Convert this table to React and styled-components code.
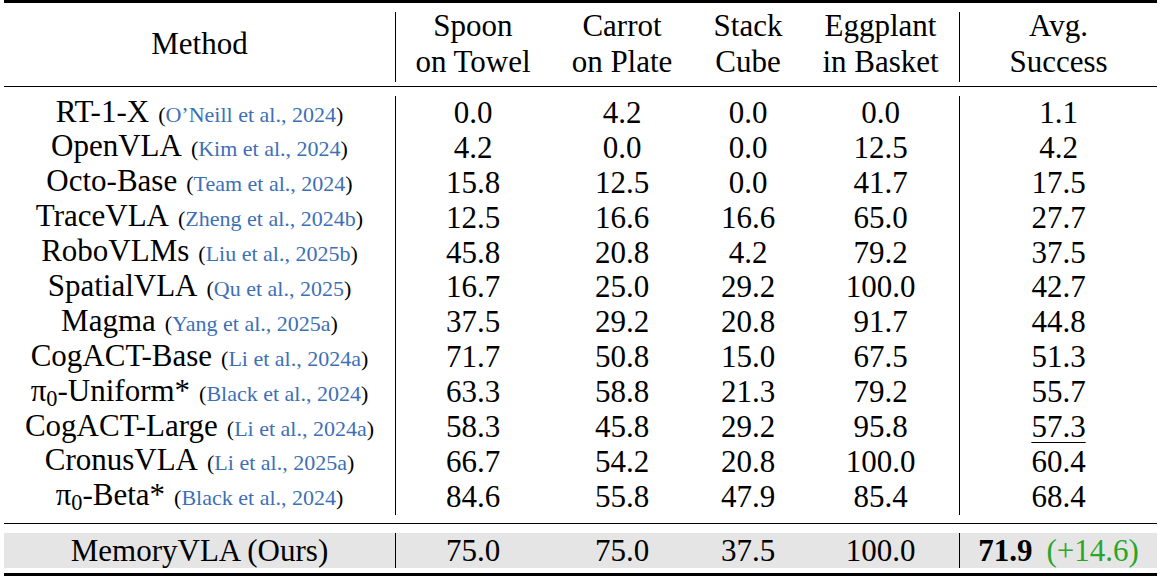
import React from "react";
import styled, { createGlobalStyle } from "styled-components";

const SERIF = '"Liberation Serif", "Times New Roman", serif';

const GlobalStyle = createGlobalStyle`
  html, body {
    margin: 0;
    padding: 0;
    background: #ffffff;
  }
  body {
    font-family: ${SERIF};
  }
`;

const COLS = "392px 154px 144px 108px 158px 197px";

const Page = styled.div`
  width: 1153px;
  padding-left: 4px;
  font-family: ${SERIF};
  font-size: 31px;
  color: #000;
`;

const Rule = styled.div`
  height: ${(p) => p.$h || 1}px;
  background: #000;
`;

const Section = styled.div`
  padding: ${(p) => p.$pad};
`;

const RowGrid = styled.div`
  display: grid;
  grid-template-columns: ${COLS};
  background: ${(p) => (p.$shade ? "#e5e5e5" : "transparent")};
`;

const Cell = styled.div`
  display: flex;
  align-items: center;
  justify-content: center;
  white-space: nowrap;
  height: ${(p) => p.$h}px;
  line-height: ${(p) => p.$h}px;
  border-right: ${(p) => (p.$divider ? "1px solid #000" : "none")};
`;

const HeadCell = styled.div`
  display: flex;
  align-items: center;
  justify-content: center;
  text-align: center;
  height: 70px;
  padding-bottom: 6px;
  box-sizing: border-box;
  line-height: 36px;
  border-right: ${(p) => (p.$divider ? "1px solid #000" : "none")};
`;

const Cite = styled.span`
  font-size: 22px;
  margin-left: 9px;
  color: #000;
`;

const CiteLink = styled.span`
  color: #3d6fb6;
`;

const Sub = styled.span`
  display: inline-block;
  font-size: 0.72em;
  line-height: 1;
  transform: translateY(0.22em);
`;

const Under = styled.span`
  text-decoration: underline;
  text-decoration-thickness: 1px;
  text-underline-offset: 5px;
`;

const Best = styled.span`
  font-weight: bold;
`;

const Gain = styled.span`
  color: #2aa52a;
  margin-left: 14px;
`;

const headers = [
  ["Method"],
  ["Spoon", "on Towel"],
  ["Carrot", "on Plate"],
  ["Stack", "Cube"],
  ["Eggplant", "in Basket"],
  ["Avg.", "Success"],
];

const rows = [
  { name: "RT-1-X", cite: "O’Neill et al., 2024", v: ["0.0", "4.2", "0.0", "0.0", "1.1"] },
  { name: "OpenVLA", cite: "Kim et al., 2024", v: ["4.2", "0.0", "0.0", "12.5", "4.2"] },
  { name: "Octo-Base", cite: "Team et al., 2024", v: ["15.8", "12.5", "0.0", "41.7", "17.5"] },
  { name: "TraceVLA", cite: "Zheng et al., 2024b", v: ["12.5", "16.6", "16.6", "65.0", "27.7"] },
  { name: "RoboVLMs", cite: "Liu et al., 2025b", v: ["45.8", "20.8", "4.2", "79.2", "37.5"] },
  { name: "SpatialVLA", cite: "Qu et al., 2025", v: ["16.7", "25.0", "29.2", "100.0", "42.7"] },
  { name: "Magma", cite: "Yang et al., 2025a", v: ["37.5", "29.2", "20.8", "91.7", "44.8"] },
  { name: "CogACT-Base", cite: "Li et al., 2024a", v: ["71.7", "50.8", "15.0", "67.5", "51.3"] },
  { name: "-Uniform*", pi: true, cite: "Black et al., 2024", v: ["63.3", "58.8", "21.3", "79.2", "55.7"] },
  { name: "CogACT-Large", cite: "Li et al., 2024a", v: ["58.3", "45.8", "29.2", "95.8", "57.3"], under: true },
  { name: "CronusVLA", cite: "Li et al., 2025a", v: ["66.7", "54.2", "20.8", "100.0", "60.4"] },
  { name: "-Beta*", pi: true, cite: "Black et al., 2024", v: ["84.6", "55.8", "47.9", "85.4", "68.4"] },
];

const ROW_H = 34.9;

function MethodName({ row }) {
  return (
    <span>
      {row.pi && (
        <>
          π<Sub>0</Sub>
        </>
      )}
      {row.name}
      <Cite>
        (<CiteLink>{row.cite}</CiteLink>)
      </Cite>
    </span>
  );
}

export default function App() {
  return (
    <Page>
      <GlobalStyle />
      <Rule $h={3} />
      <Section $pad="9px 0 4px">
        <RowGrid>
          {headers.map((h, i) => (
            <HeadCell key={i} $divider={i === 0 || i === 4}>
              <div>
                {h.map((line) => (
                  <div key={line}>{line}</div>
                ))}
              </div>
            </HeadCell>
          ))}
        </RowGrid>
      </Section>
      <Rule />
      <Section $pad="9px 0 8px">
        {rows.map((row) => (
          <RowGrid key={row.name + row.cite}>
            <Cell $h={ROW_H} $divider>
              <MethodName row={row} />
            </Cell>
            {row.v.map((val, i) => (
              <Cell key={i} $h={ROW_H} $divider={i === 3}>
                {i === 4 && row.under ? <Under>{val}</Under> : val}
              </Cell>
            ))}
          </RowGrid>
        ))}
      </Section>
      <Rule />
      <Section $pad="9px 0 5px">
        <RowGrid $shade>
          <Cell $h={35} $divider>MemoryVLA (Ours)</Cell>
          <Cell $h={35}>75.0</Cell>
          <Cell $h={35}>75.0</Cell>
          <Cell $h={35}>37.5</Cell>
          <Cell $h={35} $divider>100.0</Cell>
          <Cell $h={35}>
            <Best>71.9</Best>
            <Gain>(+14.6)</Gain>
          </Cell>
        </RowGrid>
      </Section>
      <Rule $h={3} />
    </Page>
  );
}
